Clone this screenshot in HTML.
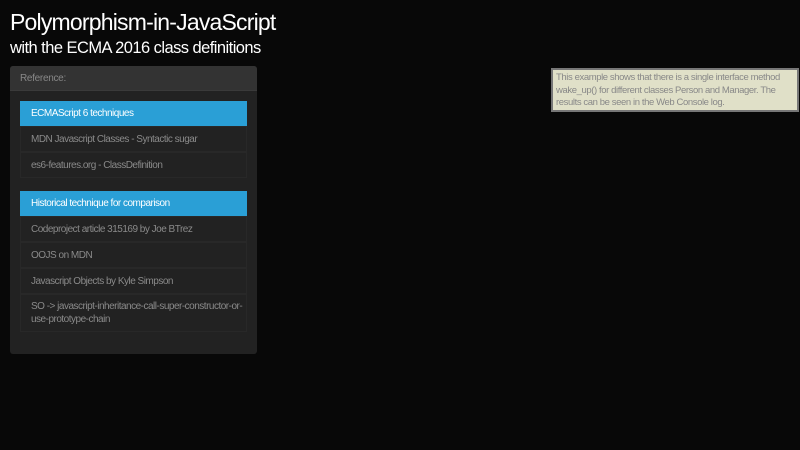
<!DOCTYPE html>
<html><head><style>
body{margin:0;width:800px;height:450px;background:#080808;font-family:"Liberation Sans",sans-serif;position:relative;overflow:hidden}
.a{position:absolute}
h1{position:absolute;left:10px;top:9px;margin:0;font-size:23px;letter-spacing:-0.8px;font-weight:normal;color:#fff}
h2{position:absolute;left:10px;top:39px;margin:0;font-size:16.5px;letter-spacing:-0.55px;font-weight:normal;color:#fff}
.panel{left:10px;top:66px;width:247px;height:288px;background:#222;border-radius:3px}
.ph{left:10px;top:66px;width:247px;height:25px;background:#333;border-radius:3px 3px 0 0;border-bottom:1px solid #3a3a3a;box-sizing:border-box;color:#888;font-size:10px;letter-spacing:-0.3px;line-height:25px;padding-left:10px}
.it{left:20px;width:227px;box-sizing:border-box;background:#222;border:1px solid #282828;color:#8a8a8a;font-size:10px;letter-spacing:-0.5px;padding:0 10px;display:flex;align-items:center}
.hd{background:#2a9fd6;color:#fff;border-color:#2a9fd6}
.note{left:551px;top:68px;width:248px;height:44px;box-sizing:border-box;background:#e0e0c8;border:2px solid #777;color:#888;font-size:9.5px;letter-spacing:-0.4px;line-height:12.5px;padding:2px 3px}
</style></head><body>
<h1>Polymorphism-in-JavaScript</h1>
<h2>with the ECMA 2016 class definitions</h2>
<div class="a panel"></div>
<div class="a ph">Reference:</div>
<div class="a it hd" style="top:101px;height:25px">ECMAScript 6 techniques</div>
<div class="a it" style="top:126px;height:26px">MDN Javascript Classes - Syntactic sugar</div>
<div class="a it" style="top:152px;height:26px">es6-features.org - ClassDefinition</div>
<div class="a it hd" style="top:191px;height:25px">Historical technique for comparison</div>
<div class="a it" style="top:216px;height:26px">Codeproject article 315169 by Joe BTrez</div>
<div class="a it" style="top:242px;height:26px">OOJS on MDN</div>
<div class="a it" style="top:268px;height:26px">Javascript Objects by Kyle Simpson</div>
<div class="a it" style="top:294px;height:38px;line-height:13px;padding-right:2px">SO -&gt; javascript-inheritance-call-super-constructor-or-use-prototype-chain</div>
<div class="a note">This example shows that there is a single interface method wake_up() for different classes Person and Manager. The results can be seen in the Web Console log.</div>
</body></html>
